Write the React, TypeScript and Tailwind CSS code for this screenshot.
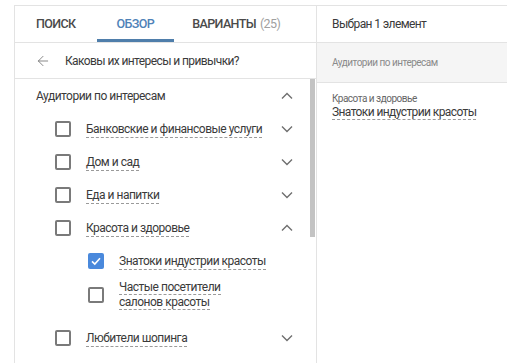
import { ArrowLeft } from 'lucide-react';

type Item = {
  label: string;
  lines?: string[];
  checked?: boolean;
  level: 1 | 2;
  chevron?: 'up' | 'down';
};

const items: Item[] = [
  { label: 'Банковские и финансовые услуги', level: 1, chevron: 'down' },
  { label: 'Дом и сад', level: 1, chevron: 'down' },
  { label: 'Еда и напитки', level: 1, chevron: 'down' },
  { label: 'Красота и здоровье', level: 1, chevron: 'up' },
  { label: 'Знатоки индустрии красоты', level: 2, checked: true },
  { label: '', lines: ['Частые посетители', 'салонов красоты'], level: 2 },
  { label: 'Любители шопинга', level: 1, chevron: 'down' },
  // next row is scrolled below the fold, only the checkbox top peeks in
  { label: '', level: 1 },
];

function Chevron({ dir }: { dir: 'up' | 'down' }) {
  return (
    <svg width="12" height="8" viewBox="0 0 12 8" className="shrink-0">
      <polyline
        points={dir === 'down' ? '1,1.5 6,6.5 11,1.5' : '1,6.5 6,1.5 11,6.5'}
        fill="none"
        stroke="#6f6f6f"
        strokeWidth="1.4"
      />
    </svg>
  );
}

function Checkbox({ checked }: { checked?: boolean }) {
  if (checked) {
    return (
      <div className="w-[16px] h-[16px] rounded-[2px] bg-[#4a89dc] flex items-center justify-center shrink-0">
        <svg width="12" height="12" viewBox="0 0 12 12">
          <polyline points="2,6.3 4.8,9 10,3.2" fill="none" stroke="white" strokeWidth="1.6" />
        </svg>
      </div>
    );
  }
  return <div className="w-[16px] h-[16px] rounded-[2px] border-2 border-[#7a7a7a] shrink-0" />;
}

export default function App() {
  return (
    <div
      className="w-[507px] h-[363px] overflow-hidden bg-white pt-[5px] pl-[14px] text-[#3a3a3a] whitespace-nowrap tracking-[-0.5px]"
      style={{ fontFamily: 'Roboto, "Liberation Sans", sans-serif' }}
    >
      <div className="flex h-[358px] border-t border-l border-[#e3e3e3]">
        {/* left panel */}
        <div className="w-[301px] flex flex-col shrink-0">
          <div className="flex h-[37px] shrink-0 border-b border-[#e3e3e3] text-[12.5px] font-medium tracking-[-0.6px]">
            <div className="px-[21px] flex items-center text-[#4a4a4a]">ПОИСК</div>
            <div className="px-[20px] flex items-center text-[#4f82b8] border-b-[3px] border-[#4f7eab] pt-[3px]">
              ОБЗОР
            </div>
            <div className="px-[18px] flex items-center text-[#4a4a4a]">
              ВАРИАНТЫ<span className="ml-[4px] font-normal text-[#a0a0a0]">(25)</span>
            </div>
          </div>
          <div className="flex items-center h-[36px] shrink-0 border-b border-[#e3e3e3] pl-[20px] gap-[14px] text-[12px]">
            <ArrowLeft size={16} strokeWidth={1.3} color="#777" />
            <span className="tracking-[-0.6px]">Каковы их интересы и привычки?</span>
          </div>
          <div className="flex flex-1 min-h-0 overflow-hidden">
            <div className="flex-1 flex flex-col">
              <div className="flex items-center h-[33px] shrink-0 pl-[21px] pr-[17px] text-[12px] justify-between">
                <span>Аудитории по интересам</span>
                <Chevron dir="up" />
              </div>
              {items.map((it, i) => (
                <div
                  key={i}
                  className={`flex items-center shrink-0 pr-[17px] ${it.lines ? 'h-[44px] pb-[8px]' : 'h-[33px]'} ${
                    it.level === 1 ? 'pl-[40px]' : 'pl-[73px]'
                  } text-[12px]`}
                >
                  <Checkbox checked={it.checked} />
                  <div className="flex-1 pl-[15px]">
                    {it.lines ? (
                      <div className="flex flex-col leading-[12px] gap-[1px]">
                        {it.lines.map((l) => (
                          <span key={l} className="self-start border-b border-dashed border-[#9a9a9a] pb-[1px]">
                            {l}
                          </span>
                        ))}
                      </div>
                    ) : it.label ? (
                      <span className="border-b border-dashed border-[#9a9a9a] pb-[1px]">{it.label}</span>
                    ) : null}
                  </div>
                  {it.chevron && <Chevron dir={it.chevron} />}
                </div>
              ))}
            </div>
            <div className="w-[6px] shrink-0 flex flex-col">
              <div className="h-[158px] w-[5px] bg-[#c3c3c3]" />
            </div>
          </div>
        </div>
        {/* right panel */}
        <div className="flex-1 flex flex-col border-l border-[#e3e3e3]">
          <div className="h-[37px] flex items-center pl-[15px] border-b border-[#e3e3e3] text-[12px] tracking-[-0.6px]">
            Выбран 1 элемент
          </div>
          <div className="h-[40px] flex items-center pl-[15px] bg-[#f5f5f5] border-b border-[#e3e3e3] text-[10px] text-[#8a8a8a]">
            Аудитории по интересам
          </div>
          <div className="pl-[15px] pt-[10px] flex flex-col items-start">
            <span className="text-[10px] text-[#666] leading-[12px]">Красота и здоровье</span>
            <span className="text-[12px] leading-[14px] border-b border-dashed border-[#9a9a9a] tracking-[-0.6px]">
              Знатоки индустрии красоты
            </span>
          </div>
        </div>
      </div>
    </div>
  );
}
